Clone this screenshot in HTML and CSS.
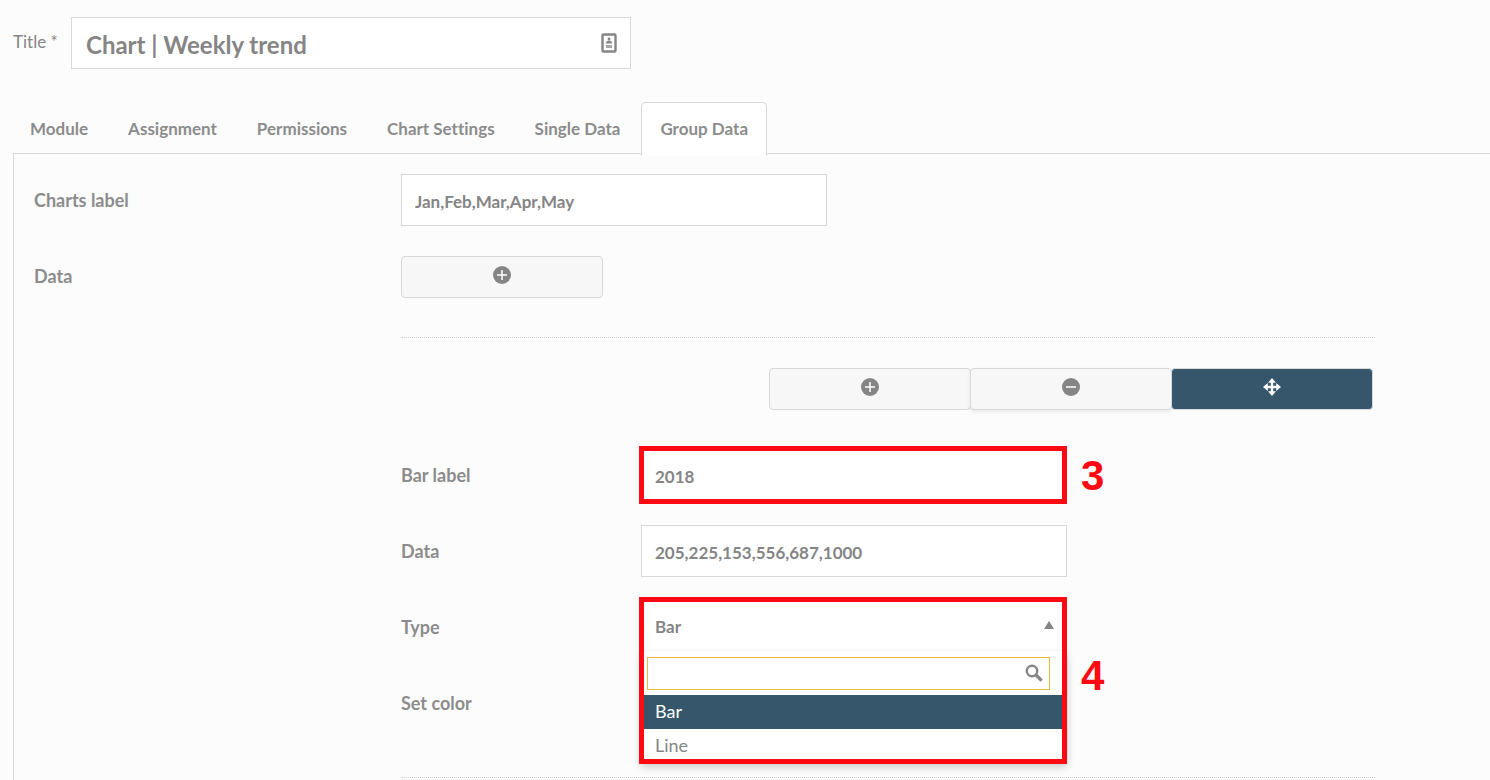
FILE: index.html
```
<!DOCTYPE html>
<html lang="en">
<head>
    <meta charset="UTF-8">
    <meta name="viewport" content="width=device-width, initial-scale=1.0">
    <title>Chart | Weekly trend</title>
    <link rel="stylesheet" href="styles.css">
</head>
<body>
    <header class="title-row">
        <label class="title-label" for="title">Title *</label>
        <div class="title-field">
            <input type="text" id="title" class="text-input title-input" value="Chart | Weekly trend">
            <svg class="autofill-icon" width="16" height="20" viewBox="0 0 16 20">
                <rect x="1.5" y="1.5" width="13" height="17" rx="1" fill="#fff" stroke="#858585" stroke-width="2.4"/>
                <circle cx="8" cy="6" r="1.4" fill="#858585"/>
                <path d="M5 10.5q0-3 3-3t3 3z" fill="#858585"/>
                <path d="M5 12h6v3H5z" fill="#a8a8a8"/>
            </svg>
        </div>
    </header>

    <nav class="tabs">
        <a href="#module" class="tab">Module</a>
        <a href="#assignment" class="tab">Assignment</a>
        <a href="#permissions" class="tab">Permissions</a>
        <a href="#settings" class="tab">Chart Settings</a>
        <a href="#single" class="tab">Single Data</a>
        <a href="#group" class="tab active">Group Data</a>
    </nav>

    <main class="panel">
        <div class="row">
            <label class="row-label" for="chartsLabel">Charts label</label>
            <input type="text" id="chartsLabel" class="text-input" value="Jan,Feb,Mar,Apr,May">
        </div>

        <div class="row">
            <span class="row-label data-label">Data</span>
            <div class="row-body">
                <button type="button" class="btn" aria-label="Add">
                    <svg width="18" height="18" viewBox="0 0 18 18">
                        <circle cx="9" cy="9" r="9" fill="#858585"/>
                        <path d="M9 4v10M4 9h10" stroke="#fff" stroke-width="1.5"/>
                    </svg>
                </button>

                <section class="group">
                    <div class="btn-group">
                        <button type="button" class="btn" aria-label="Add">
                            <svg width="18" height="18" viewBox="0 0 18 18">
                                <circle cx="9" cy="9" r="9" fill="#858585"/>
                                <path d="M9 4v10M4 9h10" stroke="#fff" stroke-width="1.5"/>
                            </svg>
                        </button>
                        <button type="button" class="btn btn-remove" aria-label="Remove">
                            <svg width="18" height="18" viewBox="0 0 18 18">
                                <circle cx="9" cy="9" r="9" fill="#858585"/>
                                <path d="M4 9h10" stroke="#fff" stroke-width="1.5"/>
                            </svg>
                        </button>
                        <button type="button" class="btn btn-move" aria-label="Move">
                            <svg width="18" height="18" viewBox="0 0 18 18">
                                <path d="M9 0l4 4.8h-2.8v3h3V5L18 9l-4.8 4v-2.8h-3v3H13L9 18l-4-4.8h2.8v-3h-3V13L0 9l4.8-4v2.8h3v-3H5z" fill="#fff"/>
                            </svg>
                        </button>
                    </div>

                    <div class="sub-row">
                        <label class="row-label" for="barLabel">Bar label</label>
                        <div class="field">
                            <input type="text" id="barLabel" class="text-input" value="2018">
                            <div class="mark"></div>
                            <span class="mark-number">3</span>
                        </div>
                    </div>

                    <div class="sub-row">
                        <label class="row-label" for="barData">Data</label>
                        <div class="field">
                            <input type="text" id="barData" class="text-input" value="205,225,153,556,687,1000">
                        </div>
                    </div>

                    <div class="sub-row">
                        <label class="row-label" for="type">Type</label>
                        <div class="field">
                            <select id="type" class="text-input type-select">
                                <option selected>Bar</option>
                                <option>Line</option>
                            </select>
                            <svg class="arrow-icon" width="10" height="8" viewBox="0 0 10 8">
                                <path d="M5 0l5 8H0z" fill="#858585"/>
                            </svg>
                            <div class="dropdown">
                                <div class="search">
                                    <input type="text" class="search-input" aria-label="Search type">
                                    <svg class="search-icon" width="18" height="18" viewBox="0 0 18 18" fill="none" stroke="#858585">
                                        <circle cx="7" cy="7" r="5.2" stroke-width="2.4"/>
                                        <path d="M11 11l5.6 5.6" stroke-width="3.2"/>
                                    </svg>
                                </div>
                                <ul class="options">
                                    <li class="option selected">Bar</li>
                                    <li class="option">Line</li>
                                </ul>
                            </div>
                            <div class="mark mark-open"></div>
                            <span class="mark-number mark-number-open">4</span>
                        </div>
                    </div>

                    <div class="sub-row">
                        <span class="row-label">Set color</span>
                    </div>
                </section>
            </div>
        </div>
    </main>
</body>
</html>
```
FILE: styles.css
```
* {
    box-sizing: border-box;
}

body {
    margin: 0;
    min-height: 100vh;
    padding: 17px 0 0 13px;
    display: flex;
    flex-direction: column;
    background: #fcfcfc;
    color: #858585;
    font-family: Lato, "Liberation Sans", sans-serif;
    font-size: 18px;
    font-variant-ligatures: none;
    line-height: 24px;
}

svg {
    display: block;
}

.text-input {
    width: 426px;
    height: 52px;
    padding: 2px 13px 0;
    border: 1px solid #d8d8d8;
    border-radius: 0;
    background: #fff;
    color: #858585;
    font-family: inherit;
    font-size: 17px;
    font-weight: 700;
    outline: none;
}

/* Title */
.title-row {
    display: flex;
    margin-bottom: 33px;
}

.title-label {
    width: 58px;
    padding-top: 13px;
    font-size: 17px;
}

.title-field {
    position: relative;
}

.title-input {
    width: 560px;
    padding: 2px 14px 0;
    font-size: 24px;
}

.autofill-icon {
    position: absolute;
    top: 16px;
    right: 14px;
}

/* Tabs */
.tabs {
    display: flex;
    gap: 2px;
    margin: 0 0 -3px -2px;
    position: relative;
}

.tab {
    height: 54px;
    padding: 14px 18px 0;
    border: 1px solid transparent;
    border-bottom: none;
    border-radius: 5px 5px 0 0;
    color: #8c8c8c;
    font-size: 17px;
    font-weight: 700;
    text-decoration: none;
}

.tab.active {
    background: #fff;
    border-color: #d8d8d8;
}

/* Panel */
.panel {
    flex: 1;
    padding: 20px 115px 0 20px;
    border: solid #d8d8d8;
    border-width: 1px 0 0 1px;
}

.row {
    display: grid;
    grid-template-columns: 367px 1fr;
    margin-bottom: 30px;
}

.row:last-child {
    margin-bottom: 0;
}

.row-label {
    padding-top: 14px;
    color: #8c8c8c;
    font-weight: 700;
}

.data-label {
    padding-top: 8px;
}

.btn {
    width: 202px;
    height: 42px;
    padding: 0 0 4px;
    display: flex;
    align-items: center;
    justify-content: center;
    border: 1px solid #d8d8d8;
    border-radius: 4px;
    background: #f7f7f7;
    cursor: pointer;
}

.btn-remove {
    box-shadow: 0 2px 4px rgba(0, 0, 0, 0.08);
}

.btn-move {
    position: relative;
    background: #36566b;
}

.group {
    margin-top: 39px;
    padding: 30px 0 48px;
    border: dotted #d0d0d0;
    border-width: 1px 0;
}

.btn-group {
    display: flex;
    justify-content: flex-end;
    margin: 0 2px 39px 0;
}

.btn-group .btn + .btn {
    margin-left: -1px;
}

.sub-row {
    display: grid;
    grid-template-columns: 240px 1fr;
    min-height: 52px;
    margin-bottom: 24px;
}

.sub-row:last-child {
    margin-bottom: 0;
}

.field {
    position: relative;
    width: 426px;
    height: 52px;
}

/* Type drop-down */
.type-select {
    display: block;
    padding-top: 0;
    padding-bottom: 2px;
    appearance: none;
}

.arrow-icon {
    position: absolute;
    top: 20px;
    right: 13px;
}

.dropdown {
    position: absolute;
    z-index: 1;
    top: 50px;
    left: 0;
    right: 0;
    padding-top: 6px;
    background: #fff;
    box-shadow: 0 4px 8px rgba(0, 0, 0, 0.2);
}

.search {
    position: relative;
    margin: 0 17px 5px 6px;
}

.search-input {
    display: block;
    width: 100%;
    height: 33px;
    padding: 0 32px 0 8px;
    border: 1px solid #e6bd41;
    background: #fff;
    color: #858585;
    font: inherit;
    outline: none;
}

.search-icon {
    position: absolute;
    top: 7px;
    right: 7px;
}

.options {
    margin: 0;
    padding: 0;
    list-style: none;
}

.option {
    height: 34px;
    padding: 4px 14px;
}

.option.selected {
    background: #36566b;
    color: #fff;
}

/* Numbered marks */
.mark {
    position: absolute;
    z-index: 2;
    top: -3px;
    right: 0;
    bottom: -3px;
    left: -2px;
    border: 5px solid #ff0a12;
    pointer-events: none;
}

.mark-open {
    top: -4px;
    bottom: -111px;
}

.mark-number {
    position: absolute;
    top: 3px;
    left: 440px;
    color: #ff0a12;
    font-family: "Liberation Sans", Arial, sans-serif;
    font-size: 42px;
    font-weight: 700;
    line-height: 48px;
}

.mark-number-open {
    top: 51px;
}
```
